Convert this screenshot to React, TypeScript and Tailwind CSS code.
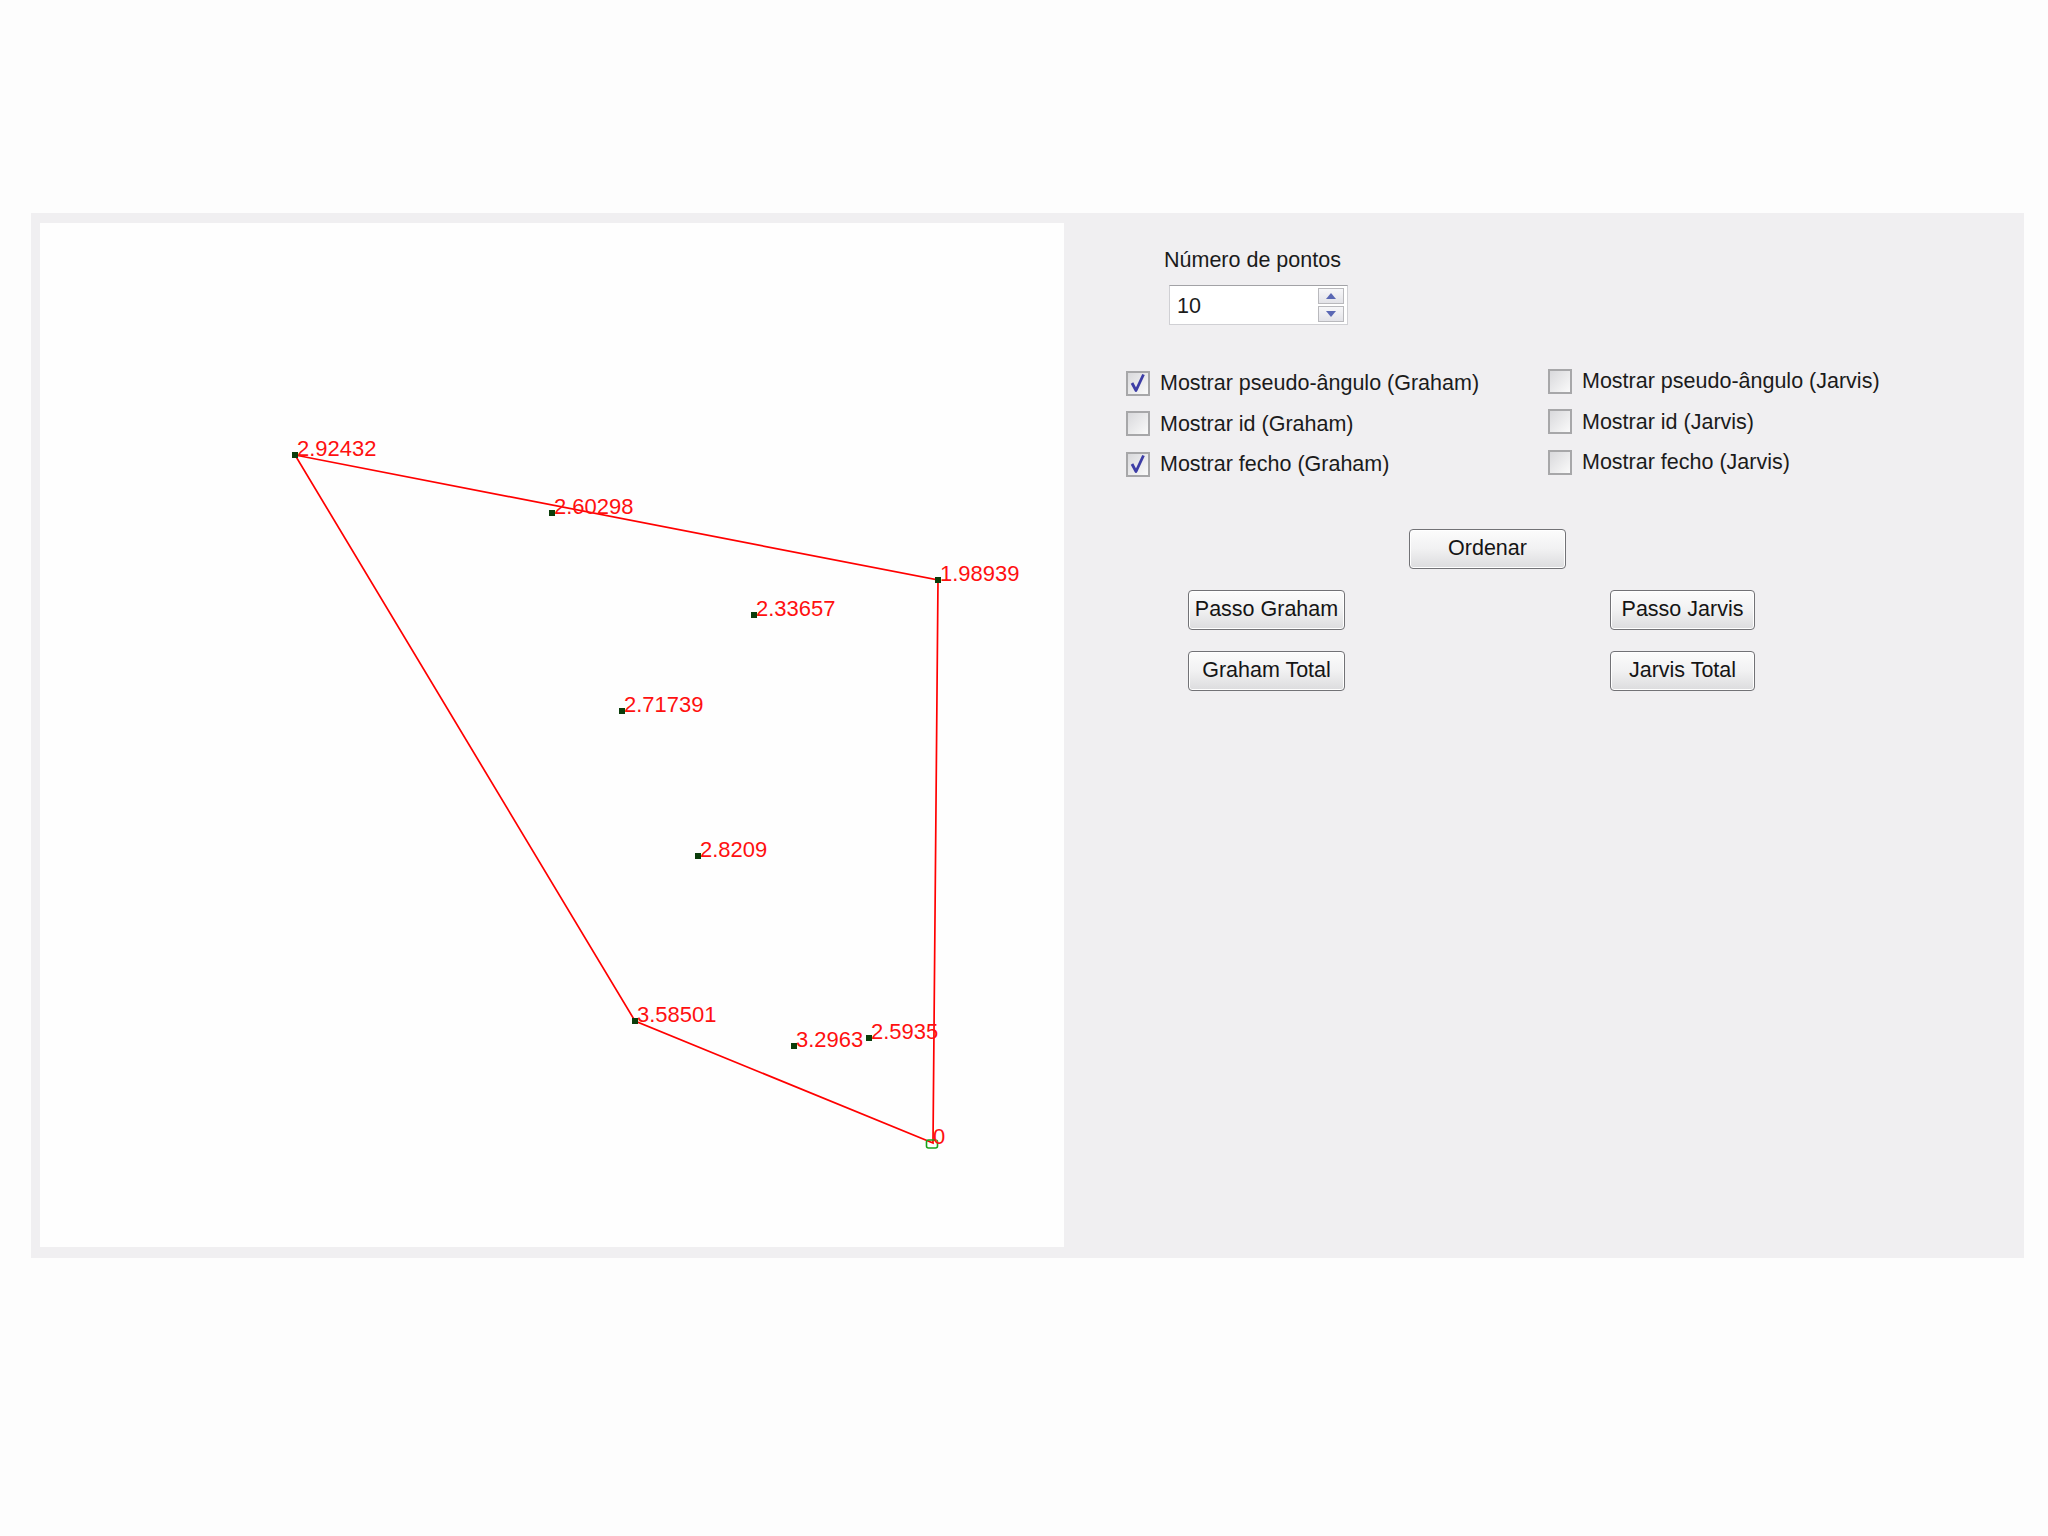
import React from 'react';

type Pt = { x: number; y: number; label: string };

const points: Pt[] = [
  { x: 255, y: 232, label: '2.92432' },
  { x: 512, y: 290, label: '2.60298' },
  { x: 898, y: 357, label: '1.98939' },
  { x: 714, y: 392, label: '2.33657' },
  { x: 582, y: 488, label: '2.71739' },
  { x: 658, y: 633, label: '2.8209' },
  { x: 595, y: 798, label: '3.58501' },
  { x: 754, y: 823, label: '3.2963' },
  { x: 829, y: 815, label: '2.5935' },
];

const pivot = { x: 892, y: 921 };

// fecho convexo (Graham)
const hull = '255,232 898,357 893,920 595,798';

const Canvas = () => (
  <div className="h-[1024px] w-[1024px] bg-[#fefefe]">
    <svg width="1024" height="1024" viewBox="0 0 1024 1024">
      <polygon points={hull} fill="none" stroke="#ff0000" strokeWidth="1.7" />
      {points.map((p) => (
        <g key={p.label}>
          <rect x={p.x - 3} y={p.y - 3} width="6" height="6" fill="#0b3d0b" />
          <text
            x={p.x + 2}
            y={p.y + 1}
            fill="#ff1010"
            fontSize="22"
            fontFamily="'Liberation Sans', Arial, sans-serif"
          >
            {p.label}
          </text>
        </g>
      ))}
      <rect
        x={pivot.x - 5.5}
        y={pivot.y - 4}
        width="11"
        height="8"
        rx="2"
        fill="none"
        stroke="#1aa31a"
        strokeWidth="1.6"
      />
      <text
        x={pivot.x + 1}
        y={pivot.y}
        fill="#ff1010"
        fontSize="22"
        fontFamily="'Liberation Sans', Arial, sans-serif"
      >
        0
      </text>
    </svg>
  </div>
);

const Checkbox = ({ checked, label }: { checked: boolean; label: string }) => (
  <div className="flex h-[40.5px] items-center gap-[10px]">
    <div className="flex h-[25px] w-[24px] items-center justify-center border-2 border-[#a7a7a9] bg-linear-to-br from-[#d9d9dc] to-[#fafafa]">
      {checked && (
        <svg width="18" height="20" viewBox="0 0 18 20">
          <path
            d="M3 10 L7 17.5 L14.5 1.5"
            fill="none"
            stroke="#3d3da6"
            strokeWidth="2.8"
            strokeLinejoin="round"
          />
        </svg>
      )}
    </div>
    <span>{label}</span>
  </div>
);

const SpinButton = ({ up }: { up: boolean }) => (
  <div className="flex h-[16px] w-[26px] items-center justify-center border border-[#b9b9bd] bg-linear-to-b from-[#f7f7f9] to-[#e3e3e8]">
    <svg width="10" height="6" viewBox="0 0 10 6">
      <path d={up ? 'M5 0 L10 6 L0 6 Z' : 'M0 0 L10 0 L5 6 Z'} fill="#5a68b4" />
    </svg>
  </div>
);

const Button = ({ label, width }: { label: string; width: string }) => (
  <button
    className={`h-[40px] ${width} rounded-[4px] border border-[#727276] bg-linear-to-b from-[#fcfcfc] via-[#f1f1f2] to-[#dcdcde] text-[21.5px] text-[#151515] shadow-[inset_0_0_0_1px_#ffffff]`}
  >
    {label}
  </button>
);

export default function App() {
  return (
    <div className="h-[1536px] w-[2048px] bg-[#fdfdfd] pl-[31px] pt-[213px] font-['Liberation_Sans',Arial,sans-serif] text-[#1b1b1b]">
      <div className="flex h-[1045px] w-[1993px] bg-[#f0eff1] pl-[9px] pt-[10px]">
        <Canvas />

        <div className="flex flex-1 flex-col text-[21.5px]">
          <div className="ml-[100px] mt-[24px] leading-[26px]">Número de pontos</div>

          <div className="ml-[105px] mt-[12px] flex h-[40px] w-[179px] items-center border border-[#d0d0d4] border-t-[#a2a2a6] bg-white pl-[7px] pr-[3px] pt-[3px]">
            <span className="flex-1">10</span>
            <div className="-mt-[3px] flex flex-col gap-[2px]">
              <SpinButton up />
              <SpinButton up={false} />
            </div>
          </div>

          <div className="ml-[62px] mt-[38px] flex">
            <div className="flex w-[422px] flex-col">
              <Checkbox checked label="Mostrar pseudo-ângulo (Graham)" />
              <Checkbox checked={false} label="Mostrar id (Graham)" />
              <Checkbox checked label="Mostrar fecho (Graham)" />
            </div>
            <div className="-mt-[2px] flex flex-col">
              <Checkbox checked={false} label="Mostrar pseudo-ângulo (Jarvis)" />
              <Checkbox checked={false} label="Mostrar id (Jarvis)" />
              <Checkbox checked={false} label="Mostrar fecho (Jarvis)" />
            </div>
          </div>

          <div className="ml-[345px] mt-[44px] flex">
            <Button label="Ordenar" width="w-[157px]" />
          </div>

          <div className="ml-[124px] mt-[21px] flex gap-[265px]">
            <Button label="Passo Graham" width="w-[157px]" />
            <Button label="Passo Jarvis" width="w-[145px]" />
          </div>

          <div className="ml-[124px] mt-[21px] flex gap-[265px]">
            <Button label="Graham Total" width="w-[157px]" />
            <Button label="Jarvis Total" width="w-[145px]" />
          </div>
        </div>
      </div>
    </div>
  );
}
